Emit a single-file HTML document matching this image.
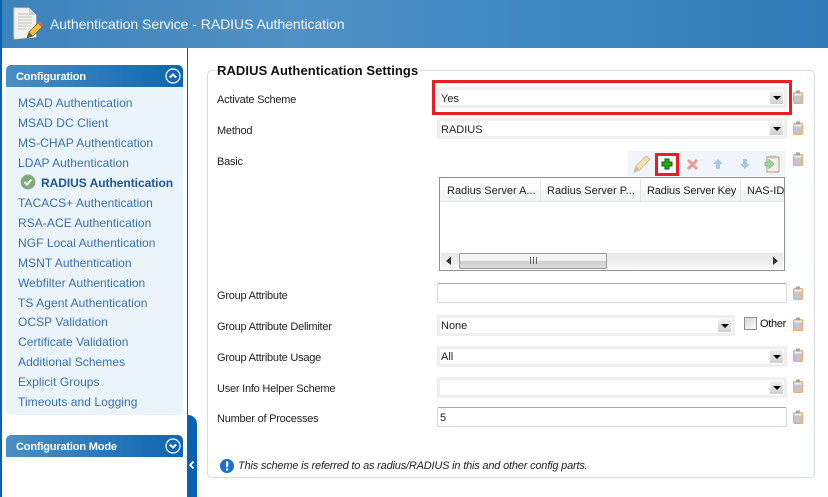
<!DOCTYPE html>
<html><head><meta charset="utf-8">
<style>
html,body{margin:0;padding:0;width:828px;height:497px;overflow:hidden;background:#fff}
body{position:relative;font-family:"Liberation Sans",sans-serif;font-size:11px;color:#222}
.a{position:absolute}
.t{position:absolute;white-space:nowrap;line-height:14px}
.nav{position:absolute;left:18px;white-space:nowrap;line-height:14px;font-size:12px;color:#3a6fab;letter-spacing:.06px}
.lab{position:absolute;left:217px;white-space:nowrap;line-height:14px;font-size:11px;color:#222;letter-spacing:-.23px}
.sel{position:absolute;left:437px;width:350px;height:21px;background:#fff;border:0;box-shadow:inset 0 0 0 3px #efefef}
.sel span{position:absolute;left:4px;top:4px;line-height:14px;font-size:11px;color:#222}
.arr{position:absolute;right:4px;top:4px;width:13px;height:13px;background:linear-gradient(#f2f2f2,#cfcfcf)}
.arr:after{content:"";position:absolute;left:3px;top:5px;border-left:4px solid transparent;border-right:4px solid transparent;border-top:4px solid #000}
.inp{position:absolute;left:437px;width:348px;height:18px;background:#fff;border:1px solid #d5dbe2;border-top:1px solid #a9a9a9;border-radius:2px}
.inp span{position:absolute;left:2px;top:3px;line-height:14px;font-size:11px}
.hd{position:absolute;left:6px;width:177px;height:22px;background:linear-gradient(90deg,#4a8fc4,#0f65b0);color:#fff;font-weight:bold;font-size:11px;letter-spacing:-.17px}
.hd span{position:absolute;left:10px;top:5px;line-height:14px}
.red{position:absolute;border:3px solid #ed1c24;box-sizing:border-box}
.th{position:absolute;top:179px;height:23px;line-height:24px;white-space:nowrap;overflow:hidden;color:#222;font-size:11px;border-right:1px solid #dfe3e8;box-sizing:border-box;padding-left:7px;background:linear-gradient(#fff 50%,#f3f4f6 50%);border-bottom:1px solid #e4e7ea}
</style></head><body>

<div class="a" style="left:0;top:0;width:828px;height:48px;background:linear-gradient(90deg,#3c82bb,#4f91c5 35%,#3d86c1 70%,#2f7ab8)"></div>
<div class="a" style="left:0;top:0;width:2px;height:497px;background:#0b60b0"></div>

<svg class="a" style="left:12px;top:6px" width="32" height="36" viewBox="0 0 32 36">
<path d="M2 2H17L24 9V31L3 33Q2 33 2 32Z" fill="#f1f1ed" stroke="#d8dde0" stroke-width=".8"/>
<path d="M17 2L24 9H17Z" fill="#cfd3d6"/>
<path d="M6 8h10M6 11h14M6 14h14M6 17h14M6 20h12M6 23h8" stroke="#c2c2be" stroke-width="1"/>
<path d="M15 32L17 26L26 17L30 21L21 30Z" fill="#f0c040" stroke="#8a6a22" stroke-width=".7"/>
<path d="M26 17L27.500 15.500L31 19L30 21Z" fill="#d9655f"/>
<path d="M15 32L17 26L21 30Z" fill="#6a5a3a"/>
</svg>
<div class="t" style="left:50px;top:16px;font-size:14px;line-height:17px;color:#f3f7fb;letter-spacing:-.04px">Authentication Service - RADIUS Authentication</div>

<div class="a" style="left:187px;top:48px;width:1px;height:370px;background:#0b60b0"></div>
<div class="a" style="left:187px;top:415px;width:10px;height:82px;background:#0b60b0;border-top-right-radius:9px"></div>
<svg class="a" style="left:188px;top:460px" width="8" height="10" viewBox="0 0 8 10"><path d="M5.500 1.500L2.200 5L5.500 8.500" fill="none" stroke="#fff" stroke-width="2"/></svg>

<div class="a" style="left:6px;top:87px;width:177px;height:328px;background:#ebf3fb;border-radius:0 0 5px 5px"></div>
<div class="hd" style="top:65px;border-radius:5px 5px 0 0"><span>Configuration</span></div>
<svg class="a" style="left:165px;top:68px" width="16" height="16" viewBox="0 0 16 16"><circle cx="8" cy="8" r="7" fill="none" stroke="#fff" stroke-width="1.2"/><path d="M4.800 9.500L8 6.500L11.200 9.500" fill="none" stroke="#fff" stroke-width="2"/></svg>

<div class="nav" style="top:96px">MSAD Authentication</div>
<div class="nav" style="top:116px">MSAD DC Client</div>
<div class="nav" style="top:136px">MS-CHAP Authentication</div>
<div class="nav" style="top:156px">LDAP Authentication</div>
<svg class="a" style="left:20px;top:174px" width="16" height="16" viewBox="0 0 16 16"><circle cx="8" cy="8" r="7" fill="#79ad72" stroke="#9fa8a0"/><path d="M4.500 8L7 10.500L11.500 5.500" fill="none" stroke="#fff" stroke-width="2"/></svg>
<div class="nav" style="left:41px;top:176px;font-weight:bold;color:#1c5596;letter-spacing:-.04px">RADIUS Authentication</div>
<div class="nav" style="top:196px">TACACS+ Authentication</div>
<div class="nav" style="top:216px">RSA-ACE Authentication</div>
<div class="nav" style="top:236px">NGF Local Authentication</div>
<div class="nav" style="top:256px">MSNT Authentication</div>
<div class="nav" style="top:276px">Webfilter Authentication</div>
<div class="nav" style="top:296px">TS Agent Authentication</div>
<div class="nav" style="top:315px">OCSP Validation</div>
<div class="nav" style="top:335px">Certificate Validation</div>
<div class="nav" style="top:355px">Additional Schemes</div>
<div class="nav" style="top:375px">Explicit Groups</div>
<div class="nav" style="top:395px">Timeouts and Logging</div>

<div class="hd" style="top:435px;border-radius:5px 5px 0 0"><span>Configuration Mode</span></div>
<svg class="a" style="left:165px;top:438px" width="16" height="16" viewBox="0 0 16 16"><circle cx="8" cy="8" r="7" fill="none" stroke="#fff" stroke-width="1.2"/><path d="M4.800 6.500L8 9.500L11.200 6.500" fill="none" stroke="#fff" stroke-width="2"/></svg>

<div class="a" style="left:207px;top:70px;width:608px;height:408px;border:1px solid #d5dde6;border-radius:5px;box-sizing:border-box"></div>
<div class="t" style="left:215px;top:63px;padding:0 2px;background:#fff;font-size:13px;line-height:15px;font-weight:bold;color:#111;letter-spacing:.08px">RADIUS Authentication Settings</div>

<div class="lab" style="top:93px">Activate Scheme</div>
<div class="lab" style="top:124px">Method</div>
<div class="lab" style="top:155px">Basic</div>
<div class="lab" style="top:289px">Group Attribute</div>
<div class="lab" style="top:320px">Group Attribute Delimiter</div>
<div class="lab" style="top:351px">Group Attribute Usage</div>
<div class="lab" style="top:382px">User Info Helper Scheme</div>
<div class="lab" style="top:412px">Number of Processes</div>

<div class="sel" style="top:87px"><span style="top:5px">Yes</span><div class="arr"></div></div>
<div class="red" style="left:432px;top:80px;width:360px;height:35px"></div>
<div class="sel" style="top:118px"><span style="top:5px">RADIUS</span><div class="arr"></div></div>

<div class="a" style="left:628px;top:151px;width:157px;height:25px;background:#f1f5fb"></div>
<svg class="a" style="left:632px;top:154px" width="20" height="20" viewBox="0 0 20 20"><path d="M2 18L4 12L14 2L18 5L8 16Z" fill="#f4e3a8" stroke="#c9bfa0"/><path d="M2 18L4 12L8 16Z" fill="#cdbf9f"/></svg>
<div class="red" style="left:655px;top:153px;width:24px;height:23px;background:#fff"></div>
<svg class="a" style="left:660px;top:157px" width="14" height="14" viewBox="0 0 14 14"><path d="M5 2H9V5H12V9H9V12H5V9H2V5H5Z" fill="#2aa81a" stroke="#0c5d0c" stroke-width="1"/></svg>
<svg class="a" style="left:686px;top:158px" width="13" height="13" viewBox="0 0 13 13"><path d="M2 2L11 11M11 2L2 11" stroke="#ee9a94" stroke-width="3"/></svg>
<svg class="a" style="left:712px;top:158px" width="12" height="12" viewBox="0 0 12 12"><path d="M6 1L11 6H8V11H4V6H1Z" fill="#a9c6e8"/></svg>
<svg class="a" style="left:739px;top:158px" width="12" height="12" viewBox="0 0 12 12"><path d="M6 11L11 6H8V1H4V6H1Z" fill="#a9c6e8"/></svg>
<svg class="a" style="left:764px;top:155px" width="16" height="18" viewBox="0 0 16 18"><rect x="3" y="2" width="12" height="15" fill="#f4f1e6" stroke="#a99f86"/><rect x="6" y="0.500" width="6" height="3" fill="#c9c2ae"/><path d="M1 7H5V4.500L10 9L5 13.500V11H1Z" fill="#9fd39a" stroke="#6aa866" stroke-width=".6"/></svg>

<div class="a" style="left:439px;top:177px;width:346px;height:94px;border:1px solid #8d929a;box-sizing:border-box;background:#fff"></div>
<div class="th" style="left:440px;width:101px">Radius Server A...</div>
<div class="th" style="left:541px;width:100px;padding-left:6px">Radius Server P...</div>
<div class="th" style="left:641px;width:100px;padding-left:6px;letter-spacing:-.15px">Radius Server Key</div>
<div class="th" style="left:741px;width:43px;border-right:0;padding-left:6px">NAS-ID</div>
<div class="a" style="left:441px;top:253px;width:342px;height:16px;background:linear-gradient(#e6e6e6,#f7f7f7)"></div>
<div class="a" style="left:459px;top:253px;width:148px;height:16px;box-sizing:border-box;border:1px solid #999;border-radius:2px;background:linear-gradient(#f4f4f4 45%,#cfcfcf 55%,#dcdcdc)"></div>
<div class="a" style="left:530px;top:257px;width:9px;height:7px;background:repeating-linear-gradient(90deg,#666 0 1px,transparent 1px 3px)"></div>
<svg class="a" style="left:446px;top:257px" width="6" height="8"><path d="M5 0V8L0 4Z" fill="#333"/></svg>
<svg class="a" style="left:773px;top:257px" width="6" height="8"><path d="M0 0V8L5 4Z" fill="#333"/></svg>

<div class="inp" style="top:283px"></div>
<div class="sel" style="top:315px;width:298px"><span>None</span><div class="arr"></div></div>
<div class="a" style="left:744px;top:317px;width:13px;height:13px;box-sizing:border-box;border:1px solid #8e8f8f;background:linear-gradient(135deg,#d8d8d8,#fbfbfb)"></div>
<div class="t" style="left:760px;top:317px;color:#111;letter-spacing:-.3px">Other</div>
<div class="sel" style="top:346px"><span>All</span><div class="arr"></div></div>
<div class="sel" style="top:377px"><div class="arr"></div></div>
<div class="inp" style="top:407px"><span>5</span></div>

<svg class="a" style="left:793px;top:90px" width="10" height="14" viewBox="0 0 10 14"><rect x=".6" y="2.600" width="8.800" height="10.800" rx="1" fill="#c3c3da" stroke="#efb060" stroke-width="1.200"/><rect x="1.500" y="3.500" width="7" height="2" fill="#eeeef6"/><rect x="3" y=".5" width="4" height="3" fill="#a5a5a0"/></svg>
<svg class="a" style="left:793px;top:121px" width="10" height="14" viewBox="0 0 10 14"><rect x=".6" y="2.600" width="8.800" height="10.800" rx="1" fill="#c3c3da" stroke="#efb060" stroke-width="1.200"/><rect x="1.500" y="3.500" width="7" height="2" fill="#eeeef6"/><rect x="3" y=".5" width="4" height="3" fill="#a5a5a0"/></svg>
<svg class="a" style="left:793px;top:152px" width="10" height="14" viewBox="0 0 10 14"><rect x=".6" y="2.600" width="8.800" height="10.800" rx="1" fill="#c3c3da" stroke="#efb060" stroke-width="1.200"/><rect x="1.500" y="3.500" width="7" height="2" fill="#eeeef6"/><rect x="3" y=".5" width="4" height="3" fill="#a5a5a0"/></svg>
<svg class="a" style="left:793px;top:286px" width="10" height="14" viewBox="0 0 10 14"><rect x=".6" y="2.600" width="8.800" height="10.800" rx="1" fill="#c3c3da" stroke="#efb060" stroke-width="1.200"/><rect x="1.500" y="3.500" width="7" height="2" fill="#eeeef6"/><rect x="3" y=".5" width="4" height="3" fill="#a5a5a0"/></svg>
<svg class="a" style="left:793px;top:317px" width="10" height="14" viewBox="0 0 10 14"><rect x=".6" y="2.600" width="8.800" height="10.800" rx="1" fill="#c3c3da" stroke="#efb060" stroke-width="1.200"/><rect x="1.500" y="3.500" width="7" height="2" fill="#eeeef6"/><rect x="3" y=".5" width="4" height="3" fill="#a5a5a0"/></svg>
<svg class="a" style="left:793px;top:348px" width="10" height="14" viewBox="0 0 10 14"><rect x=".6" y="2.600" width="8.800" height="10.800" rx="1" fill="#c3c3da" stroke="#efb060" stroke-width="1.200"/><rect x="1.500" y="3.500" width="7" height="2" fill="#eeeef6"/><rect x="3" y=".5" width="4" height="3" fill="#a5a5a0"/></svg>
<svg class="a" style="left:793px;top:379px" width="10" height="14" viewBox="0 0 10 14"><rect x=".6" y="2.600" width="8.800" height="10.800" rx="1" fill="#c3c3da" stroke="#efb060" stroke-width="1.200"/><rect x="1.500" y="3.500" width="7" height="2" fill="#eeeef6"/><rect x="3" y=".5" width="4" height="3" fill="#a5a5a0"/></svg>
<svg class="a" style="left:793px;top:410px" width="10" height="14" viewBox="0 0 10 14"><rect x=".6" y="2.600" width="8.800" height="10.800" rx="1" fill="#c3c3da" stroke="#efb060" stroke-width="1.200"/><rect x="1.500" y="3.500" width="7" height="2" fill="#eeeef6"/><rect x="3" y=".5" width="4" height="3" fill="#a5a5a0"/></svg>

<svg class="a" style="left:220px;top:459px" width="14" height="14" viewBox="0 0 14 14"><circle cx="7" cy="7" r="7" fill="#1a6fd0"/><rect x="6" y="2.500" width="2.200" height="5.500" fill="#fff"/><rect x="6" y="9.300" width="2.200" height="2.200" fill="#fff"/></svg>
<div class="t" style="left:238px;top:459px;font-style:italic;color:#222;letter-spacing:-.19px">This scheme is referred to as radius/RADIUS in this and other config parts.</div>

</body></html>
